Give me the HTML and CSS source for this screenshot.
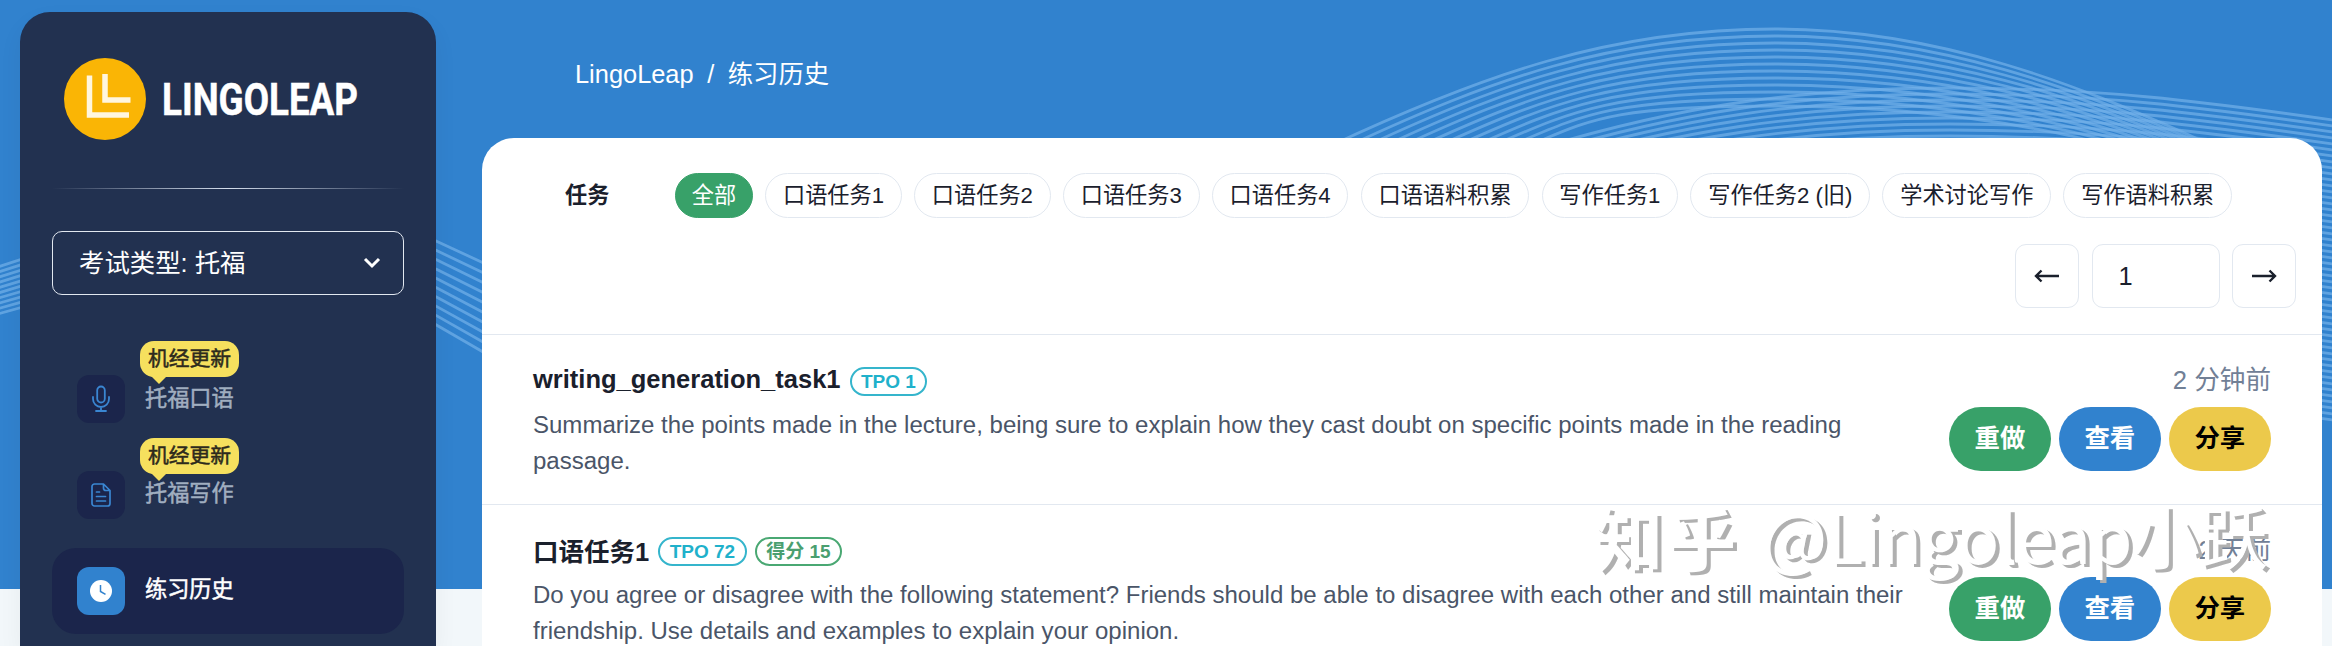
FILE: index.html
```html
<!DOCTYPE html>
<html lang="zh-CN">
<head>
  <meta charset="UTF-8" />
  <title>LingoLeap - 练习历史</title>
  <link rel="stylesheet" href="styles.css">
</head>
<body>
  <svg class="waves" id="waves" width="2332" height="588" viewBox="0 0 2332 588"></svg>

  <div class="layout">
    <aside class="sidebar">
      <div class="logo">
        <svg width="82" height="82" viewBox="0 0 82 82">
          <circle cx="41" cy="41" r="41" fill="#fab505"/>
          <path d="M25.5 17.500v39.500h39.500M41 16v26h25.500" fill="none" stroke="#fff6df" stroke-width="5.500"/>
        </svg>
        <svg class="logo-text" width="210" height="60" viewBox="0 0 210 60">
          <text x="0" y="46" textLength="196" lengthAdjust="spacingAndGlyphs">LINGOLEAP</text>
        </svg>
      </div>
      <div class="divider"></div>
      <div class="exam-select">
        <span>考试类型: 托福</span>
        <svg width="18" height="12" viewBox="0 0 18 12"><path d="M2 2l7 7 7-7" fill="none" stroke="#fff" stroke-width="3"/></svg>
      </div>
      <nav class="nav">
        <div class="nav-item">
          <span class="nav-icon">
            <svg width="20" height="28" viewBox="0 0 20 28" fill="none" stroke="#3a86d2" stroke-width="1.800" stroke-linecap="round">
              <rect x="6.200" y="1.500" width="7.600" height="16" rx="3.800"/>
              <path d="M2 12v2a8 8 0 0 0 16 0v-2M10 22v4M5 26h10"/>
            </svg>
          </span>
          <span class="nav-label">托福口语<span class="bubble">机经更新</span></span>
        </div>
        <div class="nav-item">
          <span class="nav-icon">
            <svg width="20" height="24" viewBox="0 0 20 24" fill="none" stroke="#3a86d2" stroke-width="1.700" stroke-linecap="round" stroke-linejoin="round">
              <path d="M12.500 1H3.500A2.500 2.500 0 0 0 1 3.500v17A2.500 2.500 0 0 0 3.500 23h13a2.500 2.500 0 0 0 2.500-2.500V7.500zM12.500 1v4a2.500 2.500 0 0 0 2.500 2.500h4M5.500 9h3M5.500 13.500h9M5.500 18h9"/>
            </svg>
          </span>
          <span class="nav-label up">托福写作<span class="bubble">机经更新</span></span>
        </div>
        <div class="nav-item active">
          <span class="nav-icon">
            <svg width="22" height="22" viewBox="0 0 22 22">
              <circle cx="11" cy="11" r="11" fill="#fff"/>
              <path d="M10.500 5v6.500l5 2.800" fill="none" stroke="#3182ce" stroke-width="1.500"/>
            </svg>
          </span>
          <span class="nav-label">练习历史</span>
        </div>
      </nav>
    </aside>

    <main class="main">
      <div class="breadcrumb"><span>LingoLeap</span><span>/</span><span>练习历史</span></div>

      <div class="card">
        <div class="filters">
          <span class="filters-title">任务</span>
          <div class="chips">
            <span class="chip selected">全部</span>
            <span class="chip">口语任务1</span>
            <span class="chip">口语任务2</span>
            <span class="chip">口语任务3</span>
            <span class="chip">口语任务4</span>
            <span class="chip">口语语料积累</span>
            <span class="chip">写作任务1</span>
            <span class="chip">写作任务2 (旧)</span>
            <span class="chip">学术讨论写作</span>
            <span class="chip">写作语料积累</span>
          </div>
        </div>
        <div class="pager">
          <span class="page-btn"><svg width="26" height="14" viewBox="0 0 26 14"><path d="M25 7H2M7.500 1.500L2 7l5.500 5.500" fill="none" stroke="#1a202c" stroke-width="2.400"/></svg></span>
          <span class="page-input">1</span>
          <span class="page-btn"><svg width="26" height="14" viewBox="0 0 26 14"><path d="M1 7h23M18.500 1.500L24 7l-5.500 5.500" fill="none" stroke="#1a202c" stroke-width="2.400"/></svg></span>
        </div>

        <div class="row">
          <div class="row-text">
            <div class="row-title">writing_generation_task1 <span class="badge">TPO 1</span></div>
            <p>Summarize the points made in the lecture, being sure to explain how they cast doubt on specific points made in the reading passage.</p>
          </div>
          <div class="row-side">
            <span class="time">2 分钟前</span>
            <div class="actions">
              <span class="btn green">重做</span>
              <span class="btn blue">查看</span>
              <span class="btn yellow">分享</span>
            </div>
          </div>
        </div>

        <div class="row last">
          <div class="row-text">
            <div class="row-title">口语任务1 <span class="badge">TPO 72</span><span class="badge score">得分 15</span></div>
            <p>Do you agree or disagree with the following statement? Friends should be able to disagree with each other and still maintain their friendship. Use details and examples to explain your opinion.</p>
          </div>
          <div class="row-side">
            <span class="time">2 天前</span>
            <div class="actions">
              <span class="btn green">重做</span>
              <span class="btn blue">查看</span>
              <span class="btn yellow">分享</span>
            </div>
          </div>
        </div>
      </div>
    </main>
  </div>

  <svg class="watermark" width="720" height="140" viewBox="0 0 720 140">
    <text class="bold" x="10" y="85" textLength="142">知乎</text>
    <text x="178" y="83" textLength="506">@Lingoleap小跃</text>
  </svg>

  <script src="waves.js"></script>
</body>
</html>
```
FILE: waves.js
```js
const waves = document.getElementById("waves");

function addLine(d) {
  const path = document.createElementNS("http://www.w3.org/2000/svg", "path");
  path.setAttribute("d", d);
  waves.appendChild(path);
}

// big arc behind the header
for (let k = 0; k < 12; k++) {
  const top = 29 + k * 7;
  addLine(`M${1330 + k * 18},146 C${1480 + k * 10},${76 + k * 4} 1610,${top} 1775,${top} S2080,${86 + k * 4} 2200,${140 + k * 3}`);
}

// flatter arc running off the right edge
for (let k = 0; k < 51; k++) {
  const y = k * 6;
  addLine(`M1540,${148 + y} C1680,${106 + y} 1800,${88 + y} 1950,${88 + y} S2200,${101 + y} 2340,${121 + y}`);
}

// arc behind the sidebar
for (let k = 0; k < 10; k++) {
  addLine(`M-5,${268 + k * 5.2} C150,${215 + k * 6} 330,${190 + k * 7} 436,${241 + k * 9.3} L490,${266 + k * 10}`);
}
```
FILE: styles.css
```css
* {
  box-sizing: border-box;
}
body {
  margin: 0;
  height: 646px;
  overflow: hidden;
  position: relative;
  font-family: "Liberation Sans", "Noto Sans CJK SC", sans-serif;
  font-size: 25.4px;
  color: #1a202c;
  background: linear-gradient(#3182ce 589px, #f2f7fa 589px);
}
.waves {
  position: absolute;
  top: 0;
  left: 0;
}
.waves path {
  fill: none;
  stroke: #74b0ea;
  stroke-width: 2.8;
  stroke-opacity: 0.7;
}
.layout {
  position: relative;
  display: flex;
  height: 646px;
  padding: 12px 10px 0 20px;
}

/* sidebar */
.sidebar {
  flex: none;
  width: 416px;
  padding: 46px 32px 0;
  border-radius: 30px 30px 0 0;
  background: #223150;
  box-shadow: 0 10px 24px rgba(0, 0, 0, 0.05);
}
.logo {
  display: flex;
  align-items: center;
  gap: 16px;
  padding-left: 12px;
}
.logo-text {
  overflow: visible;
}
.logo-text text {
  font-family: Roboto, sans-serif;
  font-size: 44px;
  font-weight: 700;
  fill: #fff;
  stroke: #fff;
  stroke-width: 0.5px;
}
.divider {
  height: 1px;
  margin-top: 48px;
  background: linear-gradient(to right, transparent, #d5deec, transparent);
}
.exam-select {
  display: flex;
  align-items: center;
  justify-content: space-between;
  height: 64px;
  margin-top: 42px;
  padding: 0 22px 0 26px;
  border: 1px solid #e2e8f0;
  border-radius: 10px;
  color: #fff;
}
.exam-select span {
  padding-bottom: 5px;
}
.nav {
  display: flex;
  flex-direction: column;
  gap: 10px;
  margin-top: 61px;
}
.nav-item {
  display: flex;
  align-items: center;
  gap: 20px;
  height: 86px;
  padding-left: 25px;
  border-radius: 24px;
}
.nav-item.active {
  background: #1b254b;
}
.nav-icon {
  display: flex;
  align-items: center;
  justify-content: center;
  width: 48px;
  height: 48px;
  border-radius: 12px;
  background: #1b254b;
}
.active .nav-icon {
  background: #3182ce;
}
.nav-label {
  position: relative;
  font-size: 22.2px;
  line-height: 32px;
  color: #a0aec0;
  -webkit-text-stroke: 0.5px;
}
.nav-label.up {
  margin-bottom: 3px;
}
.active .nav-label {
  color: #fff;
  margin-bottom: 2px;
}
.bubble {
  position: absolute;
  left: -5px;
  top: -42px;
  width: 99px;
  height: 36px;
  border-radius: 14px;
  background: #f6e05e;
  color: #2d2a1c;
  font-size: 20.8px;
  line-height: 35px;
  text-align: center;
  white-space: nowrap;
}
.nav-label.up .bubble {
  top: -40px;
}
.bubble::after {
  content: "";
  position: absolute;
  left: 11px;
  top: 35px;
  border: 8px solid transparent;
  border-top-color: #f6e05e;
  border-bottom: 0;
}

/* main column */
.main {
  flex: 1;
  display: flex;
  flex-direction: column;
  margin-left: 46px;
}
.breadcrumb {
  display: flex;
  gap: 13.5px;
  height: 126px;
  padding: 44px 0 0 93px;
  line-height: 36px;
  color: #fff;
}
.card {
  flex: 1;
  border-radius: 32px 32px 0 0;
  background: #fff;
}
.filters {
  display: flex;
  align-items: center;
  height: 79px;
  padding: 35px 0 0 83px;
  font-size: 22.2px;
}
.filters-title {
  width: 110px;
  padding-bottom: 4px;
  font-weight: 700;
}
.chips {
  display: flex;
  gap: 12.2px;
}
.chip {
  height: 45px;
  padding: 0 16.8px;
  border: 1px solid #e2e8f0;
  border-radius: 23px;
  line-height: 43px;
  white-space: nowrap;
}
.chip.selected {
  padding: 0 15.8px;
  border-color: #38a169;
  background: #38a169;
  color: #fff;
}
.pager {
  display: flex;
  justify-content: flex-end;
  gap: 12.5px;
  padding: 27px 26px 26px 0;
}
.page-btn, .page-input {
  display: flex;
  align-items: center;
  height: 64px;
  border: 1px solid #e2e8f0;
  border-radius: 11px;
}
.page-btn {
  justify-content: center;
  width: 64px;
}
.page-input {
  width: 128px;
  padding-left: 26px;
}
.row {
  display: flex;
  justify-content: space-between;
  height: 170px;
  padding: 28px 51px 0;
  border-top: 1px solid #e2e8f0;
}
.row.last {
  height: 142px;
}
.row-text {
  width: 1375px;
}
.row-title {
  display: flex;
  align-items: center;
  gap: 8px;
  height: 33px;
  font-size: 25.5px;
  font-weight: 700;
}
.row-text p {
  margin: 11px 0 0;
  font-size: 24.02px;
  line-height: 36.300px;
  color: #4a5568;
}
.badge {
  height: 29px;
  margin-top: 4px;
  margin-left: 1px;
  padding: 0 9.5px;
  border: 2px solid #35b5cc;
  border-radius: 15px;
  color: #1fb1cb;
  font-size: 19px;
  line-height: 25px;
}
.badge.score {
  margin-left: 0;
  border-color: #4aa873;
  color: #4a9f70;
}
.row-side {
  display: flex;
  flex-direction: column;
  align-items: flex-end;
}
.time {
  height: 44px;
  font-size: 25.6px;
  line-height: 34px;
  color: #718096;
}
.actions {
  display: flex;
  gap: 7.7px;
}
.btn {
  width: 102.3px;
  height: 64px;
  border-radius: 32px;
  color: #fff;
  font-weight: 700;
  line-height: 62px;
  text-align: center;
}
.green {
  background: #38a169;
}
.blue {
  background: #3182ce;
}
.yellow {
  background: #ecc94b;
  color: #000;
}

.watermark {
  position: absolute;
  left: 1584px;
  top: 481px;
}
.watermark text {
  font-family: "Noto Sans CJK SC", sans-serif;
  font-size: 69px;
  fill: #fff;
  filter: drop-shadow(4px 3px 0 #b0b0b0);
}
.watermark .bold {
  font-weight: 700;
}
```
